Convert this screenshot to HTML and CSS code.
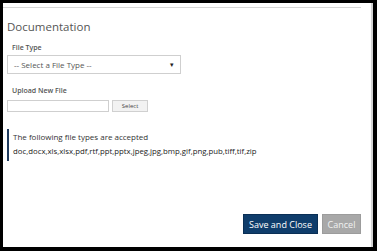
FILE: index.html
```html
<!DOCTYPE html>
<html>
<head>
<meta charset="utf-8">
<link rel="stylesheet" href="styles.css">
</head>
<body>
<div class="modal">
  <div class="rule"></div>
  <div class="content">
    <h2 class="title">Documentation</h2>
    <div class="field">
      <label class="label">File Type</label>
      <div class="select">
        <span>-- Select a File Type --</span>
        <span class="arrow">&#9662;</span>
      </div>
    </div>
    <div class="field upload">
      <label class="label">Upload New File</label>
      <div class="file-row">
        <div class="file-input"></div>
        <div class="file-btn">Select</div>
      </div>
    </div>
    <div class="note">
      <div class="note-title">The following file types are accepted</div>
      <div class="note-types">doc,docx,xls,xlsx,pdf,rtf,ppt,pptx,jpeg,jpg,bmp,gif,png,pub,tiff,tif,zip</div>
    </div>
    <div class="actions">
      <div class="btn btn-primary">Save and Close</div>
      <div class="btn btn-cancel">Cancel</div>
    </div>
  </div>
</div>
</body>
</html>
```
FILE: styles.css
```css
html, body {
  margin: 0;
  padding: 0;
  background: #000;
}
body {
  width: 377px;
  height: 251px;
  overflow: hidden;
  font-family: "Open Sans", "Liberation Sans", sans-serif;
  color: #444;
}
.modal {
  margin: 3px 4px 0 3px;
  height: 244px;
  background: #fff;
  border-right: 2px solid #d4d4d4;
  box-sizing: border-box;
  display: flex;
  flex-direction: column;
}
.rule {
  margin-top: 4px;
  width: 358px;
  height: 1px;
  background: #d6d6d6;
}
.content {
  padding: 0 10px 0 4px;
  display: flex;
  flex-direction: column;
  flex: 1;
}
.title {
  margin: 11px 0 0 0;
  font-size: 11.5px;
  font-weight: 400;
  line-height: 16px;
  color: #555;
}
.field {
  display: flex;
  flex-direction: column;
  margin-top: 8px;
}
.label {
  font-size: 7px;
  font-weight: 600;
  color: #555;
  line-height: 10px;
  padding-left: 5px;
}
.select {
  margin-top: 2px;
  width: 174px;
  height: 19px;
  box-sizing: border-box;
  border: 1px solid #cfcfcf;
  display: flex;
  align-items: center;
  justify-content: space-between;
  padding: 0 6px 0 6px;
  font-size: 8px;
  color: #555;
}
.arrow {
  font-size: 7px;
  color: #222;
}
.upload {
  margin-top: 12px;
}
.file-row {
  margin-top: 4px;
  display: flex;
  gap: 3px;
}
.file-input {
  width: 102px;
  height: 12px;
  box-sizing: border-box;
  border: 1px solid #cfcfcf;
}
.file-btn {
  width: 36px;
  height: 12px;
  box-sizing: border-box;
  border: 1px solid #d0d0d0;
  background: #f2f2f2;
  font-size: 6px;
  color: #444;
  display: flex;
  align-items: center;
  justify-content: center;
}
.note {
  margin-top: 17px;
  border-left: 2px solid #1f3b5e;
  padding: 2px 0 4px 4px;
  display: flex;
  flex-direction: column;
  gap: 4px;
}
.note-title {
  font-size: 8px;
  line-height: 11px;
  color: #333;
}
.note-types {
  font-size: 7.8px;
  line-height: 11px;
  color: #222;
}
.actions {
  margin-top: auto;
  margin-bottom: 13px;
  display: flex;
  justify-content: flex-end;
  gap: 4px;
}
.btn {
  height: 20px;
  display: flex;
  align-items: center;
  justify-content: center;
  font-size: 9px;
  box-sizing: border-box;
}
.btn-primary {
  width: 75px;
  background: #0f3d6b;
  color: #fff;
  border: 1px solid #0a2f55;
}
.btn-cancel {
  width: 39px;
  background: #a8a8a8;
  color: #f2f2f2;
  border: 1px solid #9c9c9c;
}
```
